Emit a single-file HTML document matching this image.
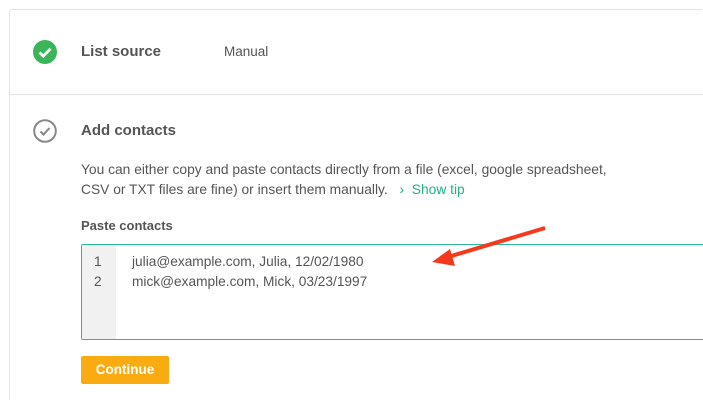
<!DOCTYPE html>
<html style="overflow:hidden;height:400px"><head><style>
body{margin:0;width:703px;height:400px;background:#fff;font-family:"Liberation Sans",sans-serif;position:relative;overflow:hidden;color:#555}
.card{position:absolute;left:9px;top:9px;width:693px;height:391px;border:1px solid #e3e3e3;border-right:none;border-bottom:none;border-radius:3px 0 0 0;box-sizing:border-box}
.div{position:absolute;left:10px;top:94px;width:693px;height:1px;background:#e3e3e3}
.t{position:absolute;white-space:nowrap}
</style></head><body>
<div class="card"></div><div class="div"></div>
<svg class="t" style="left:33px;top:40px" width="24" height="24"><circle cx="12" cy="12" r="12" fill="#3cb55a"/><path d="M6.5 12.5l3.8 3.7 7.2-7.5" stroke="#fff" stroke-width="2.8" fill="none"/></svg>
<div class="t" style="left:81px;top:43px;font-size:15px;font-weight:bold;color:#555">List source</div>
<div class="t" style="left:224px;top:44px;font-size:13.5px;color:#555">Manual</div>
<svg class="t" style="left:33px;top:119px" width="24" height="24"><circle cx="12" cy="12" r="10.8" fill="none" stroke="#888" stroke-width="2"/><path d="M7.5 12.5l3 3 6-6.5" stroke="#888" stroke-width="2" fill="none"/></svg>
<div class="t" style="left:81px;top:122px;font-size:15px;font-weight:bold;color:#555">Add contacts</div>
<div class="t" style="left:81px;top:160px;font-size:13.8px;line-height:20px">You can either copy and paste contacts directly from a file (excel, google spreadsheet,<br>CSV or TXT files are fine) or insert them manually. <span style="color:#1fb08c;margin-left:8px">›&nbsp; Show tip</span></div>
<div class="t" style="left:81px;top:218px;font-size:13px;font-weight:bold;color:#555">Paste contacts</div>
<div style="position:absolute;left:81px;top:244px;width:622px;height:96px;border:1px solid #2db896;border-right:none;border-radius:2px 0 0 2px;box-sizing:border-box"></div>
<div style="position:absolute;left:82px;top:245px;width:34px;height:94px;background:#f1f1f1"></div>
<div class="t" style="left:94px;top:252px;font-size:13.7px;line-height:20px">1<br>2</div>
<div class="t" style="left:132px;top:252px;font-size:13.7px;line-height:20px">julia@example.com, Julia, 12/02/1980<br>mick@example.com, Mick, 03/23/1997</div>
<div class="t" style="left:81px;top:356px;width:88px;height:28px;background:#fbab12;border-radius:2px;color:#fff;font-size:13.5px;font-weight:bold;text-align:center;line-height:28px">Continue</div>
<svg class="t" style="left:0;top:0" width="703" height="400"><line x1="545" y1="228" x2="448" y2="257" stroke="#f5391c" stroke-width="4"/><polygon points="432,262 450,249 455,266" fill="#f5391c"/></svg>
</body></html>
